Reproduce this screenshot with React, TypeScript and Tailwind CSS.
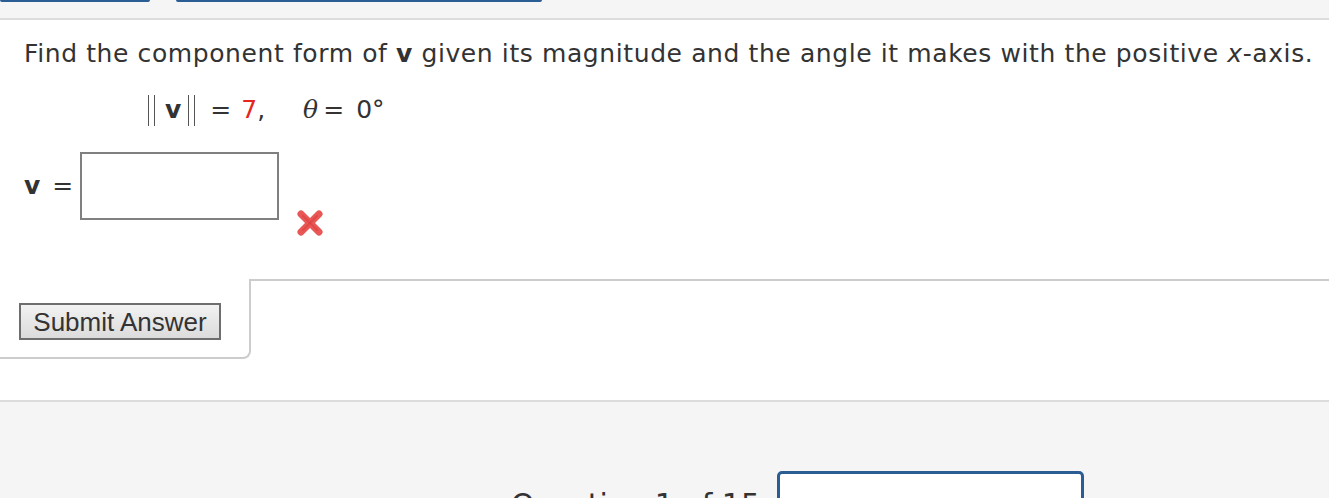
import React from "react";

function RedX() {
  return (
    <svg width="30" height="30" viewBox="0 0 30 30" className="block">
      <defs>
        <filter id="soft" x="-20%" y="-20%" width="140%" height="140%">
          <feGaussianBlur stdDeviation="0.6" />
        </filter>
      </defs>
      <g filter="url(#soft)" strokeLinecap="round">
        <line x1="6" y1="6" x2="24" y2="24" stroke="#e85757" strokeWidth="7" />
        <line x1="24" y1="6" x2="6" y2="24" stroke="#e85757" strokeWidth="7" />
        <line x1="8" y1="8" x2="22" y2="22" stroke="#d93a3a" strokeWidth="2" opacity="0.5" />
        <line x1="22" y1="8" x2="8" y2="22" stroke="#d93a3a" strokeWidth="2" opacity="0.5" />
      </g>
    </svg>
  );
}

function Bars() {
  return <span className="inline-block w-[7px] h-[31px] border-x-[1.5px] border-[#555] align-middle" />;
}

export default function App() {
  const verdana = { fontFamily: '"DejaVu Sans", Verdana, sans-serif' };
  return (
    <div className="w-[1329px] h-[498px] overflow-hidden bg-[#f5f5f5] text-[#333]" style={verdana}>
      {/* top strip */}
      <div className="h-[20px] border-b-2 border-[#dcdcdc] bg-[#f5f5f5] flex items-start">
        <div className="w-[150px] h-[2px] bg-[#2a5d94] rounded-b-sm" />
        <div className="ml-[26px] w-[366px] h-[2px] bg-[#2a5d94] rounded-b-sm" />
      </div>

      {/* white content */}
      <div className="bg-white h-[380px] flex flex-col">
        <p className="mt-[20px] ml-[24px] text-[25px] tracking-[0.6px] leading-[28px] whitespace-nowrap">
          Find the component form of <b>v</b> given its magnitude and the angle it makes with the positive{" "}
          <i>x</i>-axis.
        </p>

        <div className="mt-[26px] ml-[148px] h-[32px] flex items-center text-[25px] leading-[28px] whitespace-nowrap">
          <Bars />
          <b className="ml-[10px]">v</b>
          <span className="ml-[7px]"><Bars /></span>
          <span className="ml-[15px]">=</span>
          <span className="ml-[10px] text-[#e5261c]">7</span>
          <span>,</span>
          <span
            className="ml-[38px] italic"
            style={{ fontFamily: '"DejaVu Serif", "Liberation Serif", serif' }}
          >
            θ
          </span>
          <span className="ml-[5px]">=</span>
          <span className="ml-[12px]">0°</span>
        </div>

        <div className="mt-[26px] flex items-start">
          <div className="h-[68px] ml-[24px] flex items-center text-[25px] leading-[28px]">
            <b>v</b>
            <span className="ml-[12px]">=</span>
          </div>
          <div className="ml-[7px] w-[199px] h-[68px] border-2 border-[#808080] bg-white" />
          <div className="ml-[16px] mt-[56px]">
            <RedX />
          </div>
        </div>

        <div className="mt-[41px] flex items-start">
          <div className="w-[251px] h-[80px] border-r-2 border-b-2 border-[#cccccc] rounded-br-[8px] flex items-center pl-[19px]">
            <button
              className="w-[202px] h-[37px] border-2 border-[#6e6e6e] bg-gradient-to-b from-[#f2f2f2] to-[#dcdcdc] text-[26px] leading-none text-[#333] flex items-center justify-center mt-[7px]"
              style={{ fontFamily: '"Liberation Sans", Arial, sans-serif' }}
            >
              Submit Answer
            </button>
          </div>
          <div className="flex-1 border-t-2 border-[#cccccc]" />
        </div>
      </div>

      {/* bottom grey */}
      <div className="border-t-2 border-[#dcdcdc] bg-[#f5f5f5] h-[100px] flex items-start">
        <div className="ml-[480px] mt-[87px] w-[280px] text-right text-[30px] leading-[32px] whitespace-nowrap">
          Question 1 of 15
        </div>
        <div className="ml-[17px] mt-[69px] w-[307px] h-[60px] border-[3px] border-[#2a5d94] rounded-[5px] bg-white" />
      </div>
    </div>
  );
}
